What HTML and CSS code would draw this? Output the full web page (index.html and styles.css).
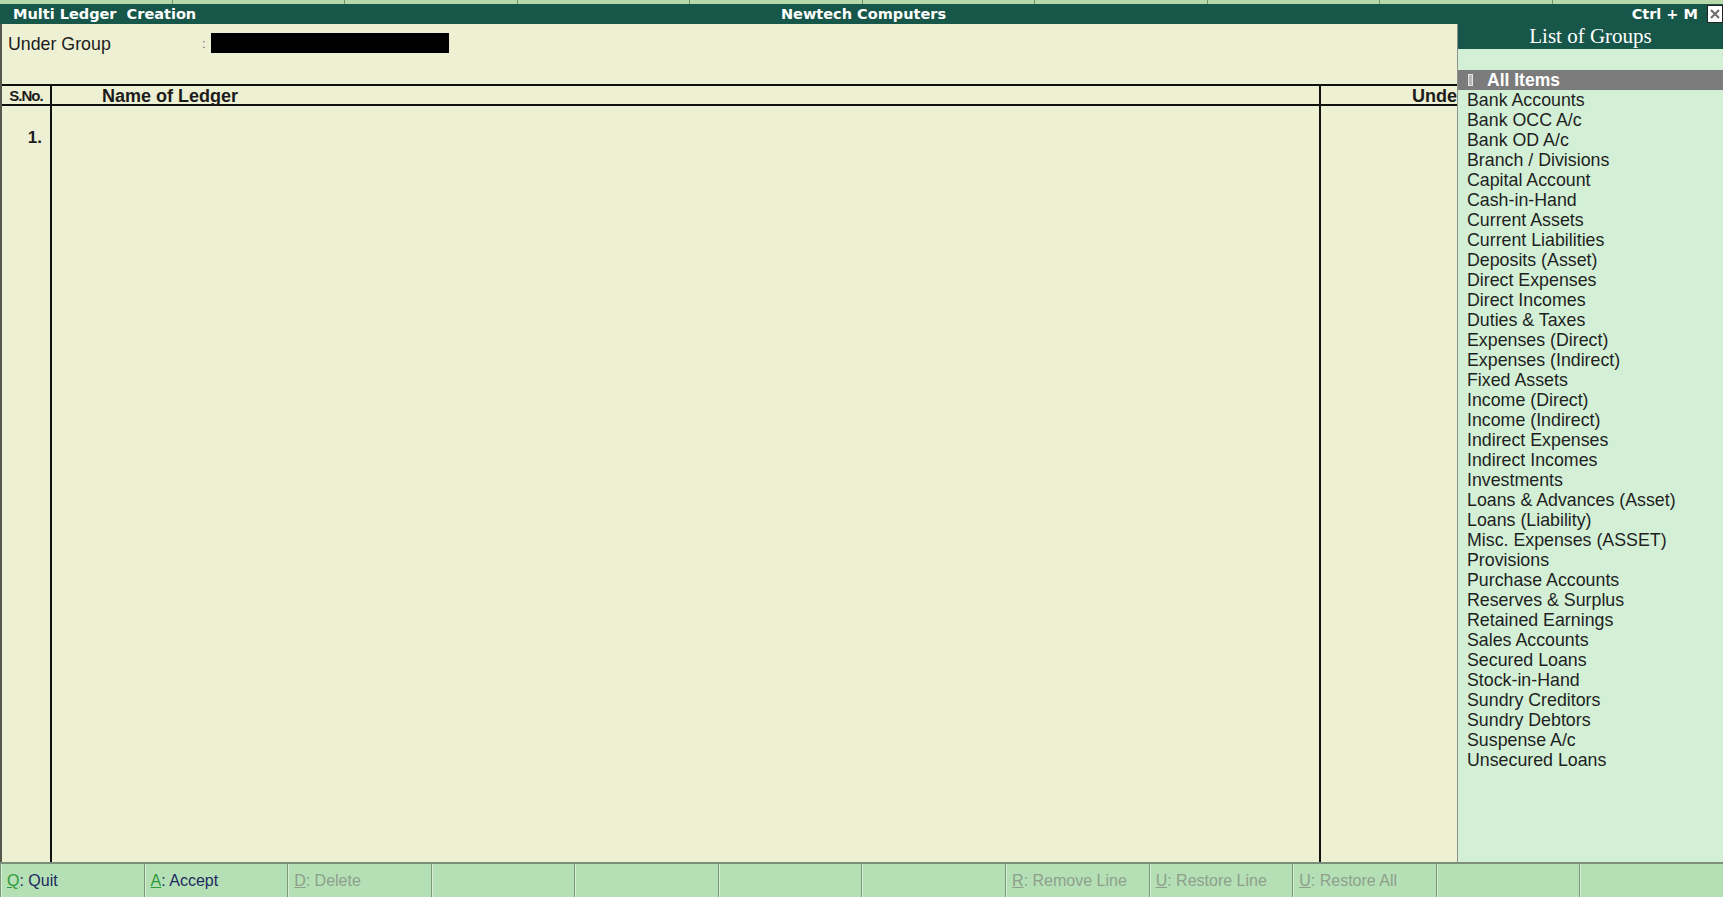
FILE: index.html
```html
<!DOCTYPE html>
<html lang="en">
<head>
    <meta charset="UTF-8">
    <meta name="viewport" content="width=device-width, initial-scale=1.0">
    <title>Multi Ledger Creation</title>
    <link rel="stylesheet" href="styles.css">
</head>
<body>
<div class="app">
    <div class="tabstrip">
        <span></span><span></span><span></span><span></span><span></span>
        <span></span><span></span><span></span><span></span><span></span>
    </div>

    <div class="titlebar">
        <span class="title-left">Multi Ledger&nbsp; Creation</span>
        <span class="title-center">Newtech Computers</span>
        <span class="title-right">
            Ctrl + M
            <span class="close">
                <svg width="12" height="12" viewBox="0 0 12 12">
                    <path d="M2 2 L10 10 M10 2 L2 10" stroke="#6f6f6f" stroke-width="2.2"/>
                </svg>
            </span>
        </span>
    </div>

    <div class="workarea">
        <div class="form">
            <div class="field-row">
                <label class="field-label">Under Group</label>
                <span class="colon">:</span>
                <span class="input-box"></span>
            </div>

            <div class="grid">
                <div class="cell head col-sno">S.No.</div>
                <div class="cell head col-name">Name of Ledger</div>
                <div class="cell head col-under">Under Group</div>

                <div class="cell body col-sno">1.</div>
                <div class="cell body col-name"></div>
                <div class="cell body col-under"></div>
            </div>
        </div>

        <aside class="group-list">
            <div class="list-title">List of Groups</div>
            <div class="list-search"></div>
            <div class="list-all"><span class="all-icon"></span>All Items</div>
            <ul class="list-items">
                <li>Bank Accounts</li>
                <li>Bank OCC A/c</li>
                <li>Bank OD A/c</li>
                <li>Branch / Divisions</li>
                <li>Capital Account</li>
                <li>Cash-in-Hand</li>
                <li>Current Assets</li>
                <li>Current Liabilities</li>
                <li>Deposits (Asset)</li>
                <li>Direct Expenses</li>
                <li>Direct Incomes</li>
                <li>Duties &amp; Taxes</li>
                <li>Expenses (Direct)</li>
                <li>Expenses (Indirect)</li>
                <li>Fixed Assets</li>
                <li>Income (Direct)</li>
                <li>Income (Indirect)</li>
                <li>Indirect Expenses</li>
                <li>Indirect Incomes</li>
                <li>Investments</li>
                <li>Loans &amp; Advances (Asset)</li>
                <li>Loans (Liability)</li>
                <li>Misc. Expenses (ASSET)</li>
                <li>Provisions</li>
                <li>Purchase Accounts</li>
                <li>Reserves &amp; Surplus</li>
                <li>Retained Earnings</li>
                <li>Sales Accounts</li>
                <li>Secured Loans</li>
                <li>Stock-in-Hand</li>
                <li>Sundry Creditors</li>
                <li>Sundry Debtors</li>
                <li>Suspense A/c</li>
                <li>Unsecured Loans</li>
            </ul>
        </aside>
    </div>

    <div class="buttonbar">
        <div class="btn"><u class="key">Q</u>: Quit</div>
        <div class="btn"><u class="key">A</u>: Accept</div>
        <div class="btn off"><u class="key">D</u>: Delete</div>
        <div class="btn"></div>
        <div class="btn"></div>
        <div class="btn"></div>
        <div class="btn"></div>
        <div class="btn off"><u class="key">R</u>: Remove Line</div>
        <div class="btn off"><u class="key">U</u>: Restore Line</div>
        <div class="btn off"><u class="key">U</u>: Restore All</div>
        <div class="btn"></div>
        <div class="btn"></div>
    </div>
</div>
</body>
</html>
```

FILE: styles.css
```css
body {
    margin: 0;
    font-family: "Liberation Sans", Arial, sans-serif;
    background: #eef0d4;
    color: #1c1c1c;
}

.app {
    width: 1723px;
    height: 897px;
    display: flex;
    flex-direction: column;
    overflow: hidden;
}

/* thin tab strip at the very top */
.tabstrip {
    height: 4px;
    display: flex;
    background: #b6d8aa;
}

.tabstrip span {
    flex: 0 0 172.5px;
    box-sizing: border-box;
    border-right: 1px solid #6f9468;
}

.titlebar {
    height: 20px;
    background: #17574a;
    color: #fff;
    display: grid;
    grid-template-columns: 1fr auto 1fr;
    align-items: center;
    font: bold 14.5px "DejaVu Sans", sans-serif;
}

.title-left {
    padding-left: 13px;
}

.title-center {
    padding-left: 4px;
}

.title-right {
    justify-self: end;
    display: flex;
    align-items: center;
    gap: 9px;
}

.close {
    width: 14px;
    height: 16px;
    background: #fff;
    border: 1px solid #222;
    display: flex;
    align-items: center;
    justify-content: center;
}

.workarea {
    flex: 1;
    position: relative;
    border-left: 2px solid #55584a;
}

.form {
    height: 100%;
    display: flex;
    flex-direction: column;
}

.field-row {
    display: flex;
    align-items: center;
    height: 20px;
    margin-top: 9px;
    font-size: 17.8px;
}

.field-label {
    flex: 0 0 200px;
    box-sizing: border-box;
    padding: 2px 0 0 6px;
}

.colon {
    flex: 0 0 9px;
    font-size: 13px;
    color: #666;
}

.input-box {
    width: 238px;
    height: 20px;
    background: #000;
}

.grid {
    flex: 1;
    margin-top: 31px;
    border-top: 2px solid #111;
    display: grid;
    grid-template-columns: 48px 1269px 1fr;
    grid-template-rows: 20px 1fr;
}

.cell {
    box-sizing: border-box;
}

.col-name,
.col-under {
    border-left: 2px solid #111;
}

.head {
    border-bottom: 2px solid #111;
    font-weight: bold;
    font-size: 18px;
    line-height: 20px;
}

.head.col-sno {
    font-size: 15px;
    text-align: center;
    letter-spacing: -1px;
}

.head.col-name {
    padding-left: 50px;
}

.head.col-under {
    padding-left: 91px;
}

.body.col-sno {
    text-align: right;
    padding: 22px 8px 0 0;
    font-weight: bold;
    font-size: 17px;
    line-height: 20px;
}

/* popup list on the right */
.group-list {
    position: absolute;
    top: 0;
    right: 0;
    bottom: 0;
    width: 266px;
    box-sizing: border-box;
    border-left: 1px solid #8c948c;
    background: #d3f0d6;
}

.list-title {
    height: 25px;
    line-height: 25px;
    background: #17574a;
    color: #fff;
    text-align: center;
    font-family: "Liberation Serif", "Times New Roman", serif;
    font-size: 21px;
}

.list-search {
    height: 21px;
}

.list-all {
    height: 20px;
    background: #7b7b7b;
    color: #fff;
    font-weight: bold;
    font-size: 17.5px;
    line-height: 20px;
    display: flex;
    align-items: center;
    padding-left: 10px;
}

.all-icon {
    width: 3px;
    height: 10px;
    border: 1px solid #e4e4e4;
    background: #b9b9b9;
    margin-right: 14px;
}

.list-items {
    list-style: none;
    margin: 0;
    padding: 0 0 0 9px;
    font-size: 17.8px;
    line-height: 20px;
    color: #1f1f1f;
}

.buttonbar {
    height: 35px;
    box-sizing: border-box;
    border-top: 2px solid #7d8e7a;
    background: #b5dfb5;
    display: grid;
    grid-template-columns: repeat(12, 1fr);
}

.btn {
    border-left: 1px solid #7d977a;
    box-shadow: inset 1px 0 #d6eed3;
    padding: 1px 0 0 6px;
    display: flex;
    align-items: center;
    font-size: 16px;
    color: #1c2b5e;
}

.btn .key {
    color: #2f9a3b;
}

.btn.off,
.btn.off .key {
    color: #8e9f8c;
}
```
